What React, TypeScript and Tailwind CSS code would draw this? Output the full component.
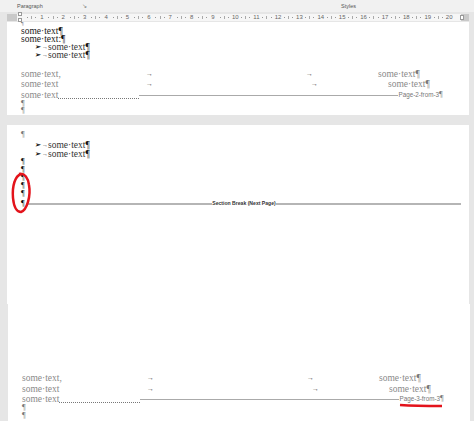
const serif = "font-['Liberation_Serif',serif]";
const sans = "font-['Liberation_Sans',sans-serif]";

const RULER = Array.from({ length: 20 }, (_, i) => i + 1);

function Ruler() {
  return (
    <div className="relative ml-[7px] flex h-[10px] w-[462px] items-center bg-[#e6e6e6]">
      <div className="h-[7px] w-[10px] shrink-0 bg-[#c9c9c9]" />
      <div className="flex h-[7px] w-[444px] shrink-0 items-center bg-[#f6f6f6] pl-[6px]">
        {RULER.map((n) => (
          <div key={n} className={`flex w-[21.4px] shrink-0 items-center justify-between ${sans} text-[6px] leading-none text-[#666]`}>
            <span className="w-[1px]" />
            <span className="h-[1px] w-[1px] bg-[#999]" />
            <span className="h-[3px] w-[1px] bg-[#aaa]" />
            <span className="h-[1px] w-[1px] bg-[#999]" />
            <span className="w-[5px] text-center">{n}</span>
          </div>
        ))}
      </div>
      <div className="h-[7px] w-[8px] shrink-0 bg-[#c9c9c9]" />
      {/* indent markers */}
      <span className="absolute left-[11px] top-0 h-[4px] w-[4px] border border-[#999] bg-white" />
      <span className="absolute left-[11px] top-[6px] h-[4px] w-[4px] border border-[#999] bg-white" />
      <span className="absolute left-[453px] top-[3px] h-[5px] w-[4px] border border-[#999] bg-white" />
    </div>
  );
}

function Mark({ gray }: { gray?: boolean }) {
  return <span className={gray ? "text-[#777]" : "text-[#111]"}>¶</span>;
}

function Pilcrow({ gray, top = 0, left = 14 }: { gray?: boolean; top?: number; left?: number }) {
  return (
    <div className={`h-[8px] ${serif} text-[8px] leading-[8px]`} style={{ marginTop: top, paddingLeft: left }}>
      <Mark gray={gray} />
    </div>
  );
}

function BodyLine({ text }: { text: string }) {
  return (
    <div className={`h-[8px] pl-[14px] ${serif} text-[9.5px] leading-[8px] whitespace-nowrap text-[#1a1a1a]`}>
      {text}
      <Mark />
    </div>
  );
}

function Bullet({ top = 0 }: { top?: number }) {
  return (
    <div className={`flex h-[8px] items-center pl-[28px] ${serif} text-[9.5px] leading-[8px] whitespace-nowrap text-[#333]`} style={{ marginTop: top }}>
      <span className="w-[7px] text-[7px] font-bold text-[#111]">➢</span>
      <span className="w-[6px] text-[6px] font-bold">→</span>
      <span>some·text</span>
      <Mark />
    </div>
  );
}

function TabRow({ left, tab, rightX, top = 0 }: { left: string; tab: number[]; rightX: number; top?: number }) {
  return (
    <div className={`relative h-[10px] ${serif} text-[9.5px] leading-[10px] whitespace-nowrap text-[#8a8a8a]`} style={{ marginTop: top }}>
      <span className="absolute left-[14px]">{left}</span>
      {tab.map((x) => (
        <span key={x} className="absolute text-[7px] font-bold text-[#555]" style={{ left: x }}>→</span>
      ))}
      <span className="absolute" style={{ left: rightX }}>
        some·text
        <Mark gray />
      </span>
    </div>
  );
}

function FooterLine({ page, top = 0 }: { page: string; top?: number }) {
  return (
    <div className="flex h-[10px] items-center pl-[14px] whitespace-nowrap" style={{ marginTop: top }}>
      <span className={`${serif} text-[9.5px] leading-[10px] text-[#8a8a8a]`}>some·text</span>
      <span className="mt-[6px] w-[81px] border-b border-dotted border-[#777]" />
      <span className="h-0 w-[259px] border-t border-[#aaa]" />
      <span className={`${sans} text-[6.3px] leading-[10px] text-[#777]`}>{page}</span>
      <span className={`${serif} text-[8px] leading-[10px] text-[#777]`}>¶</span>
    </div>
  );
}

export default function App() {
  return (
    <div className="relative h-[421px] w-[474px] overflow-hidden bg-[#e6e6e6]">
      {/* ribbon group labels */}
      <div className={`flex h-[12px] items-center bg-[#f1f1f1] pl-[17px] ${sans} text-[5.5px] text-[#555]`}>
        <span className="w-[65px]">Paragraph</span>
        <span className="text-[6px] text-[#777]">↘</span>
        <span className="ml-[254px]">Styles</span>
      </div>
      <Ruler />

      {/* page 2 bottom */}
      <div className="ml-[7px] flex h-[93px] w-[462px] flex-col bg-white">
        <div className={`-mt-[3px] h-[8px] pl-[14px] ${serif} text-[6px] leading-[8px]`}>
          <Mark gray />
        </div>
        <BodyLine text="some·text" />
        <BodyLine text="some·text:" />
        <Bullet />
        <Bullet />
        <div className="mt-[10px]">
          <TabRow left="some·text," tab={[139, 299]} rightX={371} />
          <TabRow left="some·text" tab={[139, 304]} rightX={381} />
          <FooterLine page="Page-2-from-3" top={1} />
        </div>
        <Pilcrow gray />
        <Pilcrow gray top={-1} />
      </div>

      {/* page 3 top, section break */}
      <div className="ml-[7px] mt-[10px] h-[179px] w-[462px] bg-white pt-[6px]">
        <Pilcrow gray />
        <Bullet top={2} />
        <Bullet top={1} />
        <Pilcrow top={0} />
        <Pilcrow />
        <Pilcrow />
        <Pilcrow />
        <Pilcrow />
        <div className="mt-[1px] flex h-[10px] items-center">
          <span className={`${serif} w-[21px] pl-[14px] text-[8px] leading-[8px]`}>¶</span>
          <span className="h-[2px] flex-1 bg-[#b5b5b5]" />
          <span className={`${sans} w-[64px] text-center text-[5.1px] font-bold whitespace-nowrap text-[#333]`}>Section Break (Next Page)</span>
          <span className="h-[2px] w-[185px] bg-[#b5b5b5]" />
          <span className="w-[8px]" />
        </div>
      </div>

      {/* page 3 bottom */}
      <div className="ml-[8px] h-[117px] w-[462px] bg-white pt-[69px]">
        <TabRow left="some·text," tab={[139, 299]} rightX={371} />
        <TabRow left="some·text" top={1} tab={[139, 304]} rightX={381} />
        <FooterLine page="Page-3-from-3" />
        <Pilcrow gray />
        <Pilcrow gray />
      </div>

      {/* red pen marks */}
      <svg className="absolute left-0 top-0" width="474" height="421" fill="none">
        <path d="M21 174 C15 176 12 186 13 198 C14 208 17 212 21 212 C27 210 31 196 29 185 C28 178 25 173 19 174" stroke="#e3131b" strokeWidth="2.5" />
        <path d="M400 405 C415 406 430 406 442 406" stroke="#e3131b" strokeWidth="2.5" />
      </svg>
    </div>
  );
}
